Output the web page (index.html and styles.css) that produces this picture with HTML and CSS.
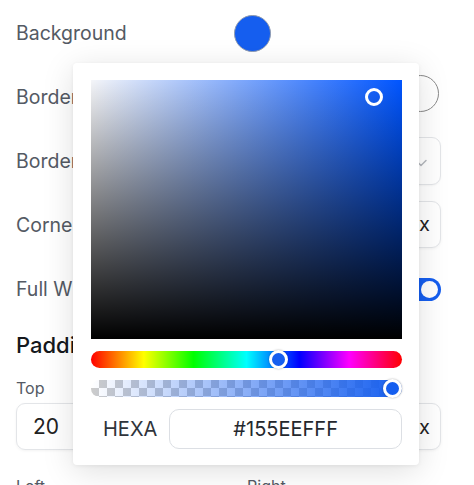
FILE: index.html
```html
<!DOCTYPE html>
<html>
<head>
<meta charset="utf-8">
<link rel="stylesheet" href="styles.css">
</head>
<body>
<div class="page">
  <div class="row row-bg"><span class="label">Background</span><span class="swatch swatch-bg"></span></div>
  <div class="row"><span class="label">Border Color</span><span class="swatch swatch-empty"></span></div>
  <div class="row"><span class="label">Border Style</span>
    <div class="select"><span>Solid</span>
      <svg class="chev" width="14" height="14" viewBox="0 0 14 14"><path d="M2 4.5 L7 9.5 L12 4.5" fill="none" stroke="#b5b8be" stroke-width="1.5" stroke-linecap="round" stroke-linejoin="round"/></svg>
    </div>
  </div>
  <div class="row"><span class="label">Corner Radius</span>
    <div class="unit-input short"><span class="val">8</span><span class="unit">px</span></div>
  </div>
  <div class="row"><span class="label">Full Width</span><span class="toggle"><span class="knob"></span></span></div>
  <h2 class="heading">Padding</h2>
  <div class="field">
    <span class="small-label">Top</span>
    <div class="unit-input wide"><span class="val">20</span><span class="unit">px</span></div>
  </div>
  <div class="pair"><span class="small-label">Left</span><span class="small-label">Right</span></div>
</div>

<div class="popover">
  <div class="sat">
    <div class="sat-white"></div>
    <div class="sat-black"></div>
    <span class="sat-handle"></span>
  </div>
  <div class="hue"><span class="bar-handle hue-handle"></span></div>
  <div class="alpha"><div class="alpha-fill"></div><span class="bar-handle alpha-handle"></span></div>
  <div class="hexa-row">
    <span class="hexa-label">HEXA</span>
    <div class="hexa-input">#155EEFFF</div>
  </div>
</div>
</body>
</html>
```

FILE: styles.css
```css
html, body {
  margin: 0;
  padding: 0;
  background: #ffffff;
}
body {
  font-family: Inter, "Noto Sans", "Liberation Sans", sans-serif;
  width: 474px;
  height: 485px;
  overflow: hidden;
  position: relative;
}
.page {
  padding: 1px 33px 0 16px;
}
.row {
  height: 64px;
  display: flex;
  align-items: center;
  justify-content: space-between;
}
.row-bg {
  display: grid;
  grid-template-columns: 218px auto;
  justify-content: start;
}
.label {
  font-size: 19.5px;
  color: #545a64;
  white-space: nowrap;
}
.swatch {
  width: 37px;
  height: 37px;
  border-radius: 50%;
  box-sizing: border-box;
}
.swatch-bg {
  background: #155eef;
  border: 1.5px solid #8f9aae;
}
.swatch-empty {
  background: #fff;
  border: 1.5px solid #8a8a8a;
  margin-right: 2px;
  margin-top: -8px;
}
.select {
  width: 140px;
  height: 48px;
  box-sizing: border-box;
  border: 1px solid #e3e5e8;
  border-radius: 9px;
  display: flex;
  align-items: center;
  justify-content: space-between;
  padding: 0 12px 0 14px;
  font-size: 18px;
  color: #222;
  box-shadow: 0 1px 2px rgba(0,0,0,0.04);
}
.chev {
  margin-top: 4px;
}
.unit-input {
  height: 47px;
  box-sizing: border-box;
  border: 1px solid #e3e5e8;
  border-radius: 9px;
  display: flex;
  align-items: center;
  justify-content: space-between;
  padding: 0 10px 0 16px;
  color: #222;
  box-shadow: 0 1px 3px rgba(0,0,0,0.05);
}
.unit-input.short {
  width: 140px;
  margin-top: -2px;
}
.val {
  font-size: 21px;
}
.unit {
  font-size: 20px;
}
.toggle {
  width: 42px;
  height: 23px;
  border-radius: 12px;
  background: #155eef;
  display: flex;
  align-items: center;
  justify-content: flex-end;
  padding: 0 3px;
  box-sizing: border-box;
}
.knob {
  width: 17px;
  height: 17px;
  border-radius: 50%;
  background: #fff;
}
.heading {
  margin: 10px 0 0;
  font-size: 22px;
  line-height: 28px;
  font-weight: 500;
  color: #15181d;
}
.field {
  margin-top: 19px;
  display: flex;
  flex-direction: column;
  gap: 5px;
}
.small-label {
  font-size: 16px;
  line-height: 20px;
  color: #545a64;
}
.unit-input.wide {
  width: 100%;
}
.pair {
  margin-top: 26px;
  display: grid;
  grid-template-columns: 231px 1fr;
}

/* popover */
.popover {
  position: absolute;
  left: 73px;
  top: 63px;
  width: 346px;
  box-sizing: border-box;
  padding: 17px 17px 16px 18px;
  background: #fff;
  border-radius: 4px;
  box-shadow: 0 6px 32px rgba(0,0,0,0.13), 0 1px 4px rgba(0,0,0,0.06);
  display: flex;
  flex-direction: column;
  gap: 12px;
}
.sat {
  position: relative;
  height: 259px;
  background: hsl(220, 100%, 50%);
}
.sat-white {
  position: absolute;
  inset: 0;
  background: linear-gradient(to right, #f4f5f8, rgba(255,255,255,0));
}
.sat-black {
  position: absolute;
  inset: 0;
  background: linear-gradient(to bottom, rgba(0,0,0,0), #000);
}
.sat-handle {
  position: absolute;
  left: 274px;
  top: 8px;
  width: 18px;
  height: 18px;
  box-sizing: border-box;
  border: 3px solid #fff;
  border-radius: 50%;
}
.hue {
  position: relative;
  height: 17px;
  border-radius: 9px;
  background: linear-gradient(to right, #f00 0%, #ff0 17%, #0f0 33%, #0ff 50%, #00f 67%, #f0f 83%, #f00 100%);
}
.bar-handle {
  position: absolute;
  top: -1px;
  width: 19px;
  height: 19px;
  box-sizing: border-box;
  border: 3px solid #fff;
  border-radius: 50%;
  background: #155eef;
  box-shadow: 0 0 2px rgba(0,0,0,0.35);
}
.hue-handle {
  left: 178px;
}
.alpha {
  position: relative;
  height: 17px;
  border-radius: 9px;
  background-color: #fff;
  background-image:
    linear-gradient(45deg, #ccc 25%, transparent 25%, transparent 75%, #ccc 75%),
    linear-gradient(45deg, #ccc 25%, transparent 25%, transparent 75%, #ccc 75%);
  background-size: 16px 16px;
  background-position: 0 0, 8px 8px;
}
.alpha-fill {
  position: absolute;
  inset: 0;
  border-radius: 9px;
  background: linear-gradient(to right, rgba(21,94,239,0), #155eef);
}
.alpha-handle {
  left: 292px;
}
.hexa-row {
  display: flex;
  align-items: center;
  gap: 12px;
}
.hexa-label {
  padding-left: 12px;
  font-size: 20px;
  color: #30343b;
}
.hexa-input {
  flex: 1;
  height: 40px;
  box-sizing: border-box;
  border: 1px solid #dcdfe4;
  border-radius: 10px;
  display: flex;
  align-items: center;
  justify-content: center;
  font-size: 20px;
  color: #25282d;
}
```
